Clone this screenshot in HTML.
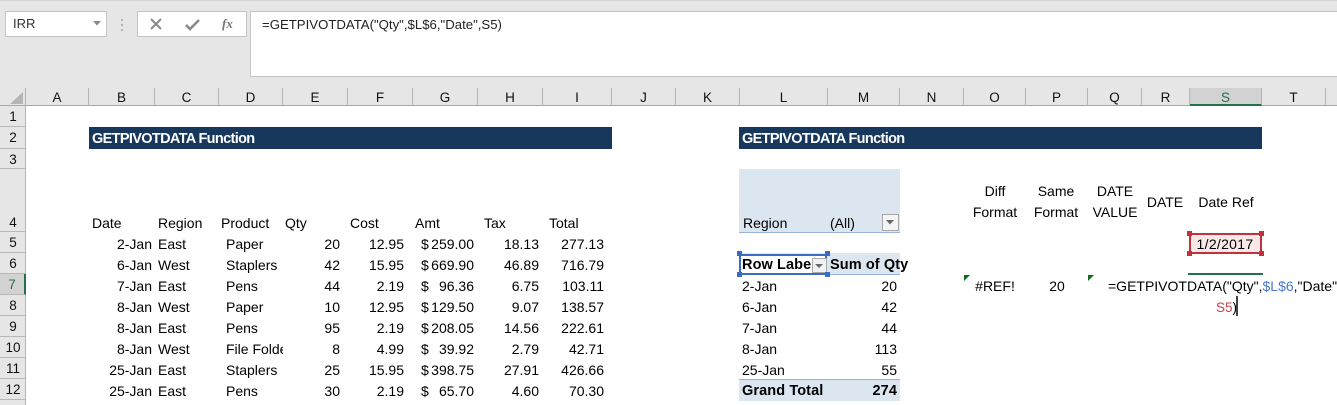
<!DOCTYPE html>
<html><head><meta charset="utf-8"><style>
html,body{margin:0;padding:0}
body{width:1337px;height:405px;position:relative;overflow:hidden;background:#fff;font-family:"Liberation Sans",sans-serif;font-size:14px;color:#000}
div{position:absolute;box-sizing:border-box}
.t,.r,.c{line-height:21px;height:21px;white-space:nowrap}
.r{text-align:right;width:100px}
.c{text-align:center;width:100px}
.b{font-weight:bold}
.h{top:88px;height:18px;line-height:19px;text-align:center;border-right:1px solid #b4b4b4;font-size:13.5px;color:#111}
.n{left:0;width:26px;text-align:center;font-size:13.5px;line-height:21px;border-bottom:1px solid #b8b8b8;color:#111}
.bar{background:#17375d;color:#fff;font-weight:bold;top:127px;height:22px;line-height:24px;padding-left:3px;font-size:14.5px;letter-spacing:-.65px;white-space:nowrap}
.bl{font-size:14.5px;letter-spacing:.1px}
</style></head><body>
<div style="left:0;top:0;width:1337px;height:88px;background:#e6e6e6;border-top:1px solid #d4d4d4"></div>
<div style="left:5px;top:11px;width:102px;height:26px;background:#fff;border:1px solid #c6c6c6;line-height:24px;padding-left:7px;font-size:13px;color:#333">IRR</div>
<svg style="position:absolute;left:93px;top:21px" width="9" height="6"><path d="M0 0h8L4 4.500z" fill="#8a8a8a"/></svg>
<svg style="position:absolute;left:120px;top:18px" width="6" height="14"><path d="M1 1h2v2H1zM1 6h2v2H1zM1 11h2v2H1z" fill="#b4b4b4"/></svg>
<div style="left:137px;top:11px;width:110px;height:26px;background:#fff;border:1px solid #c6c6c6"></div>
<svg style="position:absolute;left:148px;top:17px" width="90" height="16"><path d="M3 2l10 10M13 2L3 12" stroke="#8a8a8a" stroke-width="2" fill="none"/><path d="M38 8l4 4 9-9" stroke="#8a8a8a" stroke-width="2.6" fill="none"/></svg>
<div style="left:222px;top:14px;font:italic bold 13px/20px 'Liberation Serif',serif;color:#777">fx</div>
<div style="left:250px;top:11px;width:1087px;height:66px;background:#fff;border:1px solid #c6c6c6;border-right:0"></div>
<div class="t" style="left:262px;top:14px;font-size:13.2px;color:#222">=GETPIVOTDATA("Qty",$L$6,"Date",S5)</div>

<div style="left:0;top:88px;width:1337px;height:18px;background:#e6e6e6;border-bottom:1px solid #a8a8a8"></div>
<div style="left:0;top:106px;width:26px;height:299px;background:#e6e6e6;border-right:1px solid #b4b4b4"></div>
<svg style="position:absolute;left:8px;top:91px" width="16" height="14"><path d="M15 1v12H2z" fill="#b4b4b4"/></svg>
<div style="left:25px;top:88px;width:1px;height:18px;background:#b4b4b4"></div>

<div class="h" style="left:26px;width:63px">A</div>
<div class="h" style="left:89px;width:66px">B</div>
<div class="h" style="left:155px;width:64px">C</div>
<div class="h" style="left:219px;width:64px">D</div>
<div class="h" style="left:283px;width:65px">E</div>
<div class="h" style="left:348px;width:65px">F</div>
<div class="h" style="left:413px;width:65px">G</div>
<div class="h" style="left:478px;width:65px">H</div>
<div class="h" style="left:543px;width:69px">I</div>
<div class="h" style="left:612px;width:64px">J</div>
<div class="h" style="left:676px;width:64px">K</div>
<div class="h" style="left:740px;width:88px">L</div>
<div class="h" style="left:828px;width:72px">M</div>
<div class="h" style="left:900px;width:64px">N</div>
<div class="h" style="left:964px;width:62px">O</div>
<div class="h" style="left:1026px;width:62px">P</div>
<div class="h" style="left:1088px;width:54px">Q</div>
<div class="h" style="left:1142px;width:48px">R</div>
<div class="h" style="left:1190px;width:72px;height:18px;background:#d2d2d2;color:#217346;border-bottom:2px solid #217346">S</div>
<div class="h" style="left:1262px;width:64px">T</div>

<div class="n" style="top:106px;height:21px">1</div>
<div class="n" style="top:127px;height:22px">2</div>
<div class="n" style="top:149px;height:20px">3</div>
<div class="n" style="top:169px;height:63px;line-height:108px">4</div>
<div class="n" style="top:232px;height:21px">5</div>
<div class="n" style="top:253px;height:21px">6</div>
<div class="n" style="top:274px;height:21px;background:#d2d2d2;color:#217346;border-right:2px solid #217346">7</div>
<div class="n" style="top:295px;height:21px">8</div>
<div class="n" style="top:316px;height:21px">9</div>
<div class="n" style="top:337px;height:21px">10</div>
<div class="n" style="top:358px;height:21px">11</div>
<div class="n" style="top:379px;height:21px">12</div>

<div class="bar" style="left:89px;width:523px">GETPIVOTDATA Function</div>
<div class="bar" style="left:739px;width:523px">GETPIVOTDATA Function</div>

<div class="t" style="left:92px;top:213px">Date</div>
<div class="t" style="left:158px;top:213px">Region</div>
<div class="t" style="left:221px;top:213px">Product</div>
<div class="t" style="left:285px;top:213px">Qty</div>
<div class="t" style="left:350px;top:213px">Cost</div>
<div class="t" style="left:415px;top:213px">Amt</div>
<div class="t" style="left:484px;top:213px">Tax</div>
<div class="t" style="left:549px;top:213px">Total</div>

<div class="r" style="left:52px;top:234px">2-Jan</div><div class="t" style="left:158px;top:234px">East</div><div class="t" style="left:226px;top:234px">Paper</div><div class="r" style="left:240px;top:234px">20</div><div class="r" style="left:304px;top:234px">12.95</div><div class="t" style="left:421px;top:234px">$</div><div class="r" style="left:374px;top:234px">259.00</div><div class="r" style="left:439px;top:234px">18.13</div><div class="r" style="left:504px;top:234px">277.13</div>
<div class="r" style="left:52px;top:255px">6-Jan</div><div class="t" style="left:158px;top:255px">West</div><div class="t" style="left:226px;top:255px">Staplers</div><div class="r" style="left:240px;top:255px">42</div><div class="r" style="left:304px;top:255px">15.95</div><div class="t" style="left:421px;top:255px">$</div><div class="r" style="left:374px;top:255px">669.90</div><div class="r" style="left:439px;top:255px">46.89</div><div class="r" style="left:504px;top:255px">716.79</div>
<div class="r" style="left:52px;top:276px">7-Jan</div><div class="t" style="left:158px;top:276px">East</div><div class="t" style="left:226px;top:276px">Pens</div><div class="r" style="left:240px;top:276px">44</div><div class="r" style="left:304px;top:276px">2.19</div><div class="t" style="left:421px;top:276px">$</div><div class="r" style="left:374px;top:276px">96.36</div><div class="r" style="left:439px;top:276px">6.75</div><div class="r" style="left:504px;top:276px">103.11</div>
<div class="r" style="left:52px;top:297px">8-Jan</div><div class="t" style="left:158px;top:297px">West</div><div class="t" style="left:226px;top:297px">Paper</div><div class="r" style="left:240px;top:297px">10</div><div class="r" style="left:304px;top:297px">12.95</div><div class="t" style="left:421px;top:297px">$</div><div class="r" style="left:374px;top:297px">129.50</div><div class="r" style="left:439px;top:297px">9.07</div><div class="r" style="left:504px;top:297px">138.57</div>
<div class="r" style="left:52px;top:318px">8-Jan</div><div class="t" style="left:158px;top:318px">East</div><div class="t" style="left:226px;top:318px">Pens</div><div class="r" style="left:240px;top:318px">95</div><div class="r" style="left:304px;top:318px">2.19</div><div class="t" style="left:421px;top:318px">$</div><div class="r" style="left:374px;top:318px">208.05</div><div class="r" style="left:439px;top:318px">14.56</div><div class="r" style="left:504px;top:318px">222.61</div>
<div class="r" style="left:52px;top:339px">8-Jan</div><div class="t" style="left:158px;top:339px">West</div><div class="t" style="left:226px;top:339px;width:57px;overflow:hidden">File Folder</div><div class="r" style="left:240px;top:339px">8</div><div class="r" style="left:304px;top:339px">4.99</div><div class="t" style="left:421px;top:339px">$</div><div class="r" style="left:374px;top:339px">39.92</div><div class="r" style="left:439px;top:339px">2.79</div><div class="r" style="left:504px;top:339px">42.71</div>
<div class="r" style="left:52px;top:360px">25-Jan</div><div class="t" style="left:158px;top:360px">East</div><div class="t" style="left:226px;top:360px">Staplers</div><div class="r" style="left:240px;top:360px">25</div><div class="r" style="left:304px;top:360px">15.95</div><div class="t" style="left:421px;top:360px">$</div><div class="r" style="left:374px;top:360px">398.75</div><div class="r" style="left:439px;top:360px">27.91</div><div class="r" style="left:504px;top:360px">426.66</div>
<div class="r" style="left:52px;top:381px">25-Jan</div><div class="t" style="left:158px;top:381px">East</div><div class="t" style="left:226px;top:381px">Pens</div><div class="r" style="left:240px;top:381px">30</div><div class="r" style="left:304px;top:381px">2.19</div><div class="t" style="left:421px;top:381px">$</div><div class="r" style="left:374px;top:381px">65.70</div><div class="r" style="left:439px;top:381px">4.60</div><div class="r" style="left:504px;top:381px">70.30</div>

<div style="left:739px;top:169px;width:161px;height:64px;background:#dce6f1;border-bottom:1px solid #95b3d7"></div>
<div class="t" style="left:743px;top:213px">Region</div>
<div class="t" style="left:830px;top:213px">(All)</div>
<div style="left:882px;top:214px;width:17px;height:17px;background:#f4f4f4;border:1px solid #a8a8a8"></div>
<svg style="position:absolute;left:886px;top:220px" width="9" height="6"><path d="M0 0h8L4 4.500z" fill="#666"/></svg>
<div style="left:739px;top:253px;width:161px;height:22px;background:#dce6f1;border-bottom:1px solid #95b3d7"></div>
<div style="left:739px;top:254px;width:88px;height:21px;background:#fff;border:2px solid #3b6cc4"></div>
<div class="t b bl" style="left:742px;top:255px;width:70px;overflow:hidden">Row Labels</div>
<div style="left:812px;top:258px;width:15px;height:15px;background:#eef1f5;border:1px solid #aaa"></div>
<svg style="position:absolute;left:815px;top:264px" width="9" height="5"><path d="M0 0h8L4 4z" fill="#666"/></svg>
<div style="left:737px;top:251px;width:5px;height:5px;background:#3b6cc4"></div>
<div style="left:825px;top:251px;width:5px;height:5px;background:#3b6cc4"></div>
<div style="left:737px;top:272px;width:5px;height:5px;background:#3b6cc4"></div>
<div style="left:825px;top:272px;width:5px;height:5px;background:#3b6cc4"></div>
<div class="t b bl" style="left:830px;top:255px">Sum of Qty</div>
<div class="t" style="left:742px;top:276px">2-Jan</div><div class="r" style="left:797px;top:276px">20</div>
<div class="t" style="left:742px;top:297px">6-Jan</div><div class="r" style="left:797px;top:297px">42</div>
<div class="t" style="left:742px;top:318px">7-Jan</div><div class="r" style="left:797px;top:318px">44</div>
<div class="t" style="left:742px;top:339px">8-Jan</div><div class="r" style="left:797px;top:339px">113</div>
<div class="t" style="left:742px;top:360px">25-Jan</div><div class="r" style="left:797px;top:360px">55</div>
<div style="left:739px;top:379px;width:161px;height:22px;background:#dce6f1;border-top:1px solid #95b3d7"></div>
<div class="t b bl" style="left:742px;top:381px">Grand Total</div><div class="r b bl" style="left:797px;top:381px">274</div>

<div class="c" style="left:945px;top:181px">Diff</div><div class="c" style="left:945px;top:202px">Format</div>
<div class="c" style="left:1006px;top:181px">Same</div><div class="c" style="left:1006px;top:202px">Format</div>
<div class="c" style="left:1065px;top:181px">DATE</div><div class="c" style="left:1065px;top:202px">VALUE</div>
<div class="c" style="left:1115px;top:192px">DATE</div>
<div class="c" style="left:1176px;top:192px">Date Ref</div>

<div style="left:1189px;top:233px;width:73px;height:21px;background:#f8e8e8;border:2px solid #c0323c"></div>
<div style="left:1187px;top:231px;width:5px;height:5px;background:#c0323c"></div>
<div style="left:1259px;top:231px;width:5px;height:5px;background:#c0323c"></div>
<div style="left:1187px;top:251px;width:5px;height:5px;background:#c0323c"></div>
<div style="left:1259px;top:251px;width:5px;height:5px;background:#c0323c"></div>
<div class="c" style="left:1175px;top:234px;letter-spacing:.3px">1/2/2017</div>
<div style="left:1188px;top:273px;width:75px;height:2px;background:#217346"></div>

<svg style="position:absolute;left:964px;top:275px" width="8" height="8"><path d="M0 0h6L0 6z" fill="#0f6b1f"/></svg>
<svg style="position:absolute;left:1088px;top:275px" width="8" height="8"><path d="M0 0h6L0 6z" fill="#0f6b1f"/></svg>
<div class="c" style="left:945px;top:276px">#REF!</div>
<div class="c" style="left:1007px;top:276px">20</div>
<div class="t" style="left:1108px;top:276px;width:229px;overflow:hidden">=GETPIVOTDATA("Qty",<span style="color:#4a78d0">$L$6</span>,"Date",</div>
<div class="t" style="left:1216px;top:297px;font-size:13.500px"><span style="color:#c8404a">S5</span>)</div>
<div style="left:1236px;top:296px;width:2px;height:20px;background:#444"></div>
</body></html>
